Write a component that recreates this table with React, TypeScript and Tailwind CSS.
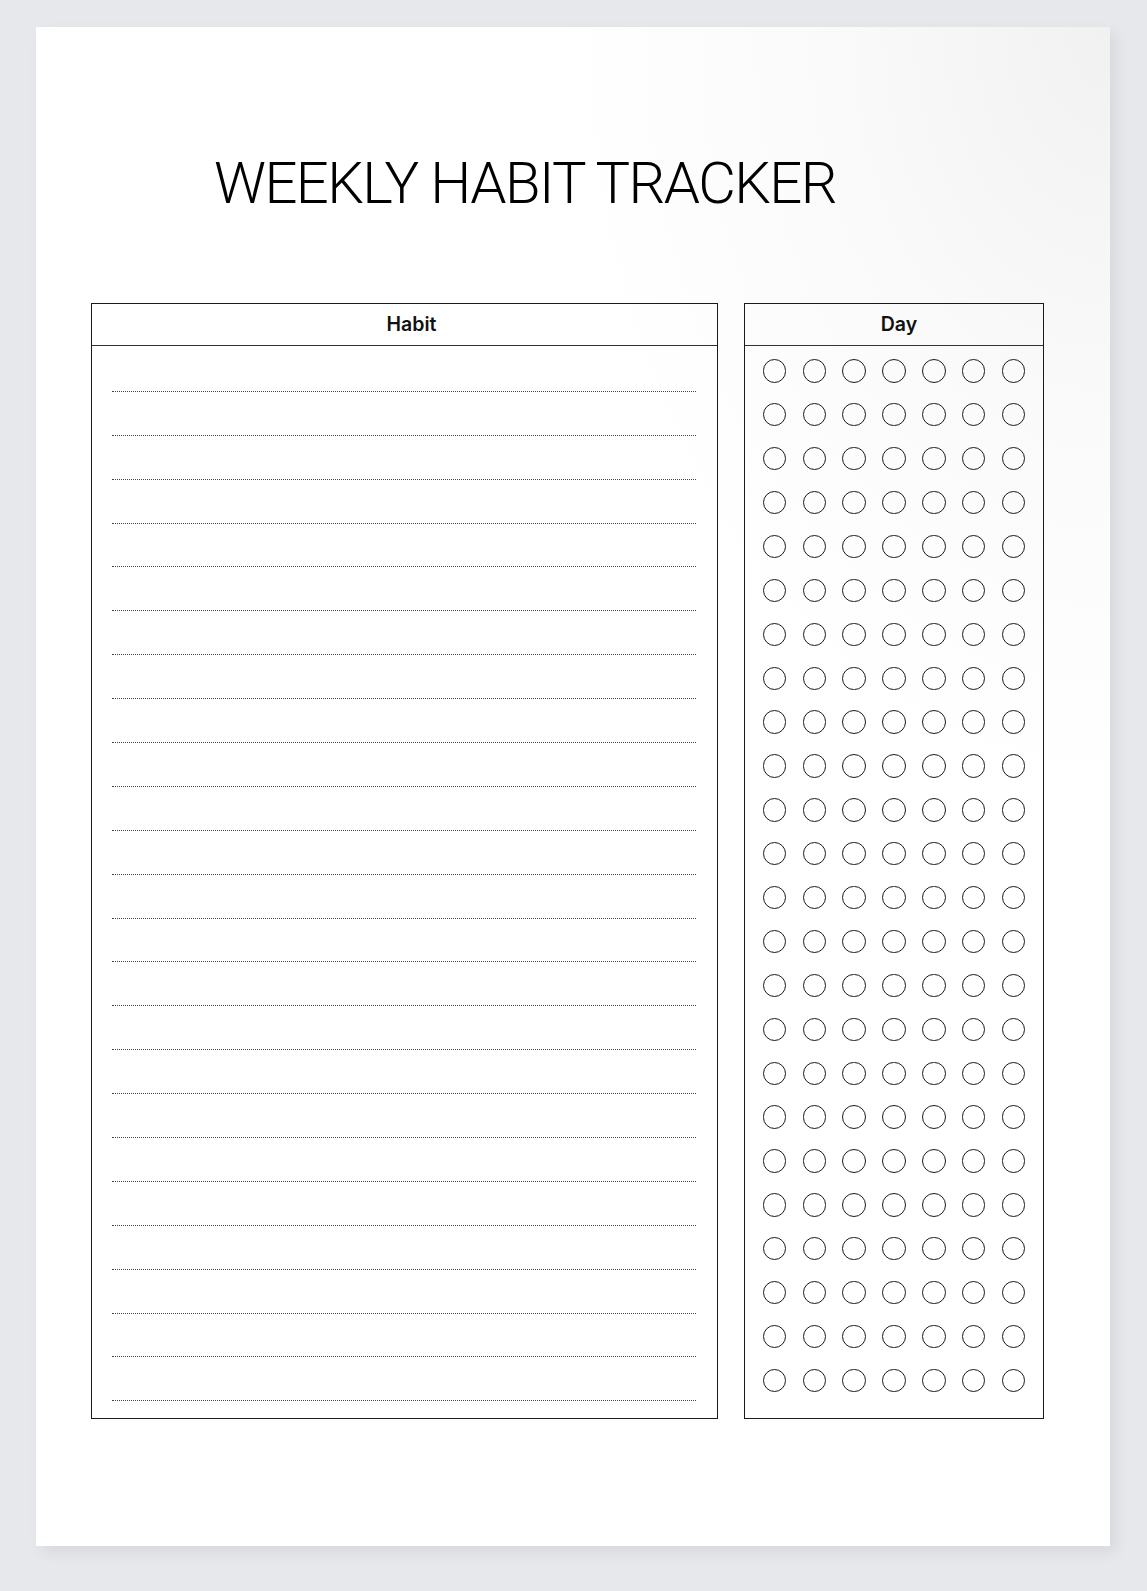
const ROWS = Array.from({ length: 24 }, (_, i) => i);
const DAYS = Array.from({ length: 7 }, (_, i) => i);

export default function App() {
  return (
    <div className="h-[1591px] w-[1147px] bg-[#e7e8ec] pt-[27px] pl-[36px]">
      {/* the sheet */}
      <div className="h-[1519px] w-[1074px] bg-white bg-[radial-gradient(ellipse_at_100%_0%,#f1f1f1_0%,#fafafa_18%,#ffffff_36%)] shadow-[6px_6px_14px_rgba(0,0,0,0.07)] pt-[120px] pl-[55px]">
        <h1 className="ml-[123px] font-['Roboto',sans-serif] text-[58px] leading-[72px] font-light tracking-[-0.027em] text-black">
          WEEKLY HABIT TRACKER
        </h1>

        <div className="mt-[84px] flex gap-[26px]">
          {/* habit list */}
          <div className="flex h-[1116px] w-[627px] flex-col border border-[#1a1a1a]">
            <div className="flex h-[42px] items-center justify-center border-b border-[#333] pl-[14px] font-['Inter',sans-serif] text-[19.5px] font-semibold text-[#111]">
              Habit
            </div>
            <div className="flex flex-col px-[20px] pr-[21px] pt-[2px]">
              {ROWS.map((r) => (
                <div key={r} className="h-[43.9px] border-b border-dotted border-[#444]" />
              ))}
            </div>
          </div>

          {/* day circles */}
          <div className="flex h-[1116px] w-[300px] flex-col border border-[#1a1a1a]">
            <div className="flex h-[42px] items-center justify-center border-b border-[#333] pl-[10px] font-['Inter',sans-serif] text-[19.5px] font-semibold text-[#111]">
              Day
            </div>
            <div className="flex flex-col pt-[3px]">
              {ROWS.map((r) => (
                <div key={r} className="flex h-[43.9px] items-center justify-center gap-[16.6px]">
                  {DAYS.map((d) => (
                    <div key={d} className="h-[23.3px] w-[23.3px] rounded-full border-[1.5px] border-[#1a1a1a]" />
                  ))}
                </div>
              ))}
            </div>
          </div>
        </div>
      </div>
    </div>
  );
}
